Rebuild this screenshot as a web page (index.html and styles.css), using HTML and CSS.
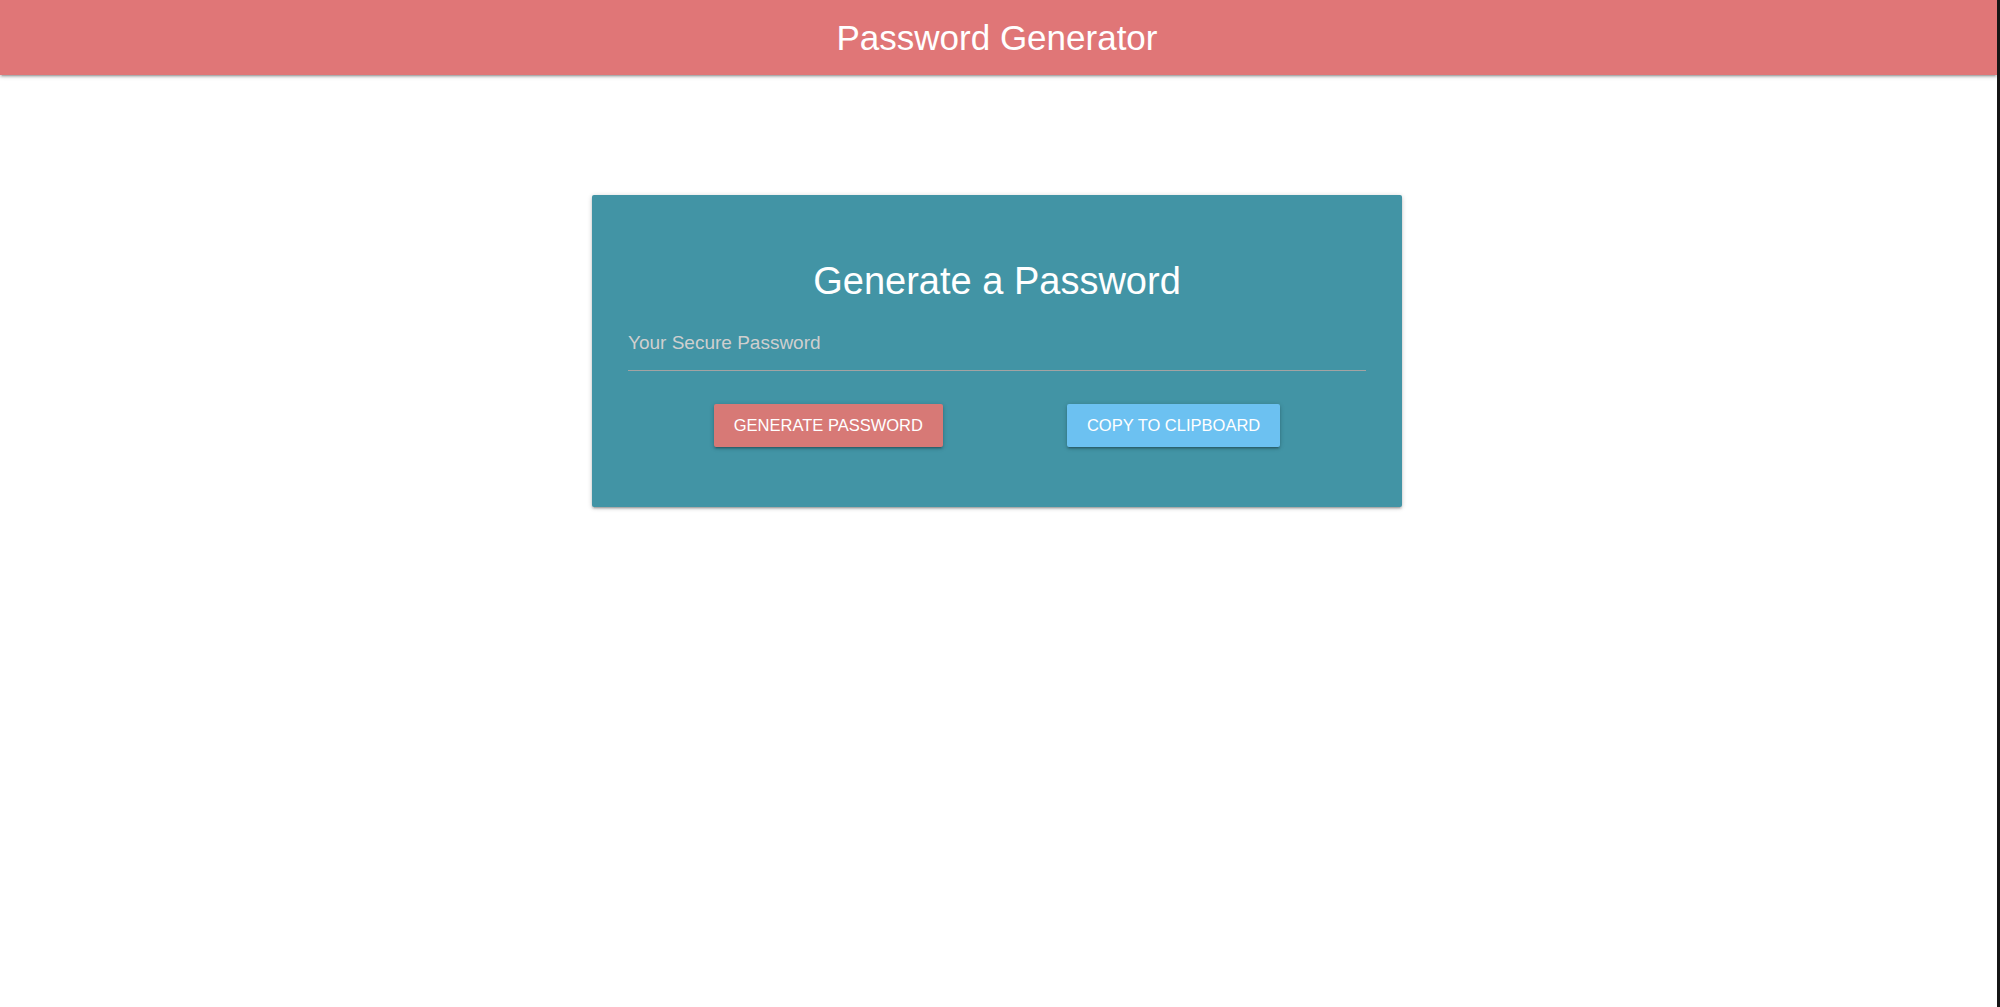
FILE: index.html
```html
<!DOCTYPE html>
<html lang="en">
<head>
<meta charset="UTF-8" />
<meta name="viewport" content="width=device-width, initial-scale=1" />
<title>Password Generator</title>
<link rel="stylesheet" href="styles.css">
</head>
<body>

<header>
  <div class="logo-text">Password Generator</div>
</header>

<main>
  <div class="card">
    <h2 class="card-title">Generate a Password</h2>
    <div class="input-field">
      <input type="text" id="password" placeholder="Your Secure Password" readonly />
    </div>
    <div class="card-actions">
      <button class="btn btn-generate" id="generate">Generate Password</button>
      <button class="btn btn-copy" id="copy">Copy to Clipboard</button>
    </div>
  </div>
</main>

</body>
</html>
```

FILE: styles.css
```css
html, body {
  margin: 0; padding: 0;
}
body {
  font-family: 'Helvetica Neue', Helvetica, 'Liberation Sans', Arial, sans-serif;
  background: #fff;
  color: #000;
  min-height: 100vh;
  border-right: 3px solid #161616;
  box-sizing: border-box;
}
header {
  background-color: #e07677;
  height: 75px;
  padding-right: 3px;
  display: flex;
  align-items: center;
  justify-content: center;
  box-shadow: 0 2px 2px 0 rgba(0,0,0,0.14), 0 3px 1px -2px rgba(0,0,0,0.12), 0 1px 5px 0 rgba(0,0,0,0.2);
}
header .logo-text {
  color: #fff;
  font-size: 35px;
}
main {
  padding-top: 120px;
  padding-right: 3px;
}
.card {
  width: 810px;
  box-sizing: border-box;
  margin: 0 auto;
  padding: 64px 36px 60px;
  background: #4294a5;
  border-radius: 2px;
  box-shadow: 0 2px 2px 0 rgba(0,0,0,0.14), 0 3px 1px -2px rgba(0,0,0,0.12), 0 1px 5px 0 rgba(0,0,0,0.2);
}
.card-title {
  margin: 0;
  text-align: center;
  color: #fff;
  font-size: 38px;
  font-weight: 400;
  line-height: 44px;
}
.input-field {
  margin-top: 29px;
}
.input-field input {
  display: block;
  width: 100%;
  box-sizing: content-box;
  height: 22px;
  padding: 0 0 16px;
  margin: 0;
  border: none;
  border-bottom: 1px solid #a3a3a3;
  background: transparent;
  outline: none;
  font-family: inherit;
  font-size: 19px;
  color: #fff;
}
.input-field input::placeholder {
  color: #cfcfcf;
}
.card-actions {
  margin-top: 33px;
  display: flex;
  justify-content: center;
  gap: 124px;
}
.btn {
  height: 43px;
  padding: 0 20px;
  border: none;
  border-radius: 2px;
  color: #fff;
  font-family: inherit;
  font-size: 16.5px;
  text-transform: uppercase;
  cursor: pointer;
  box-shadow: 0 2px 2px 0 rgba(0,0,0,0.14), 0 3px 1px -2px rgba(0,0,0,0.12), 0 1px 5px 0 rgba(0,0,0,0.2);
}
.btn-generate {
  background: #d77976;
}
.btn-copy {
  background: #6cc1f1;
}
```
